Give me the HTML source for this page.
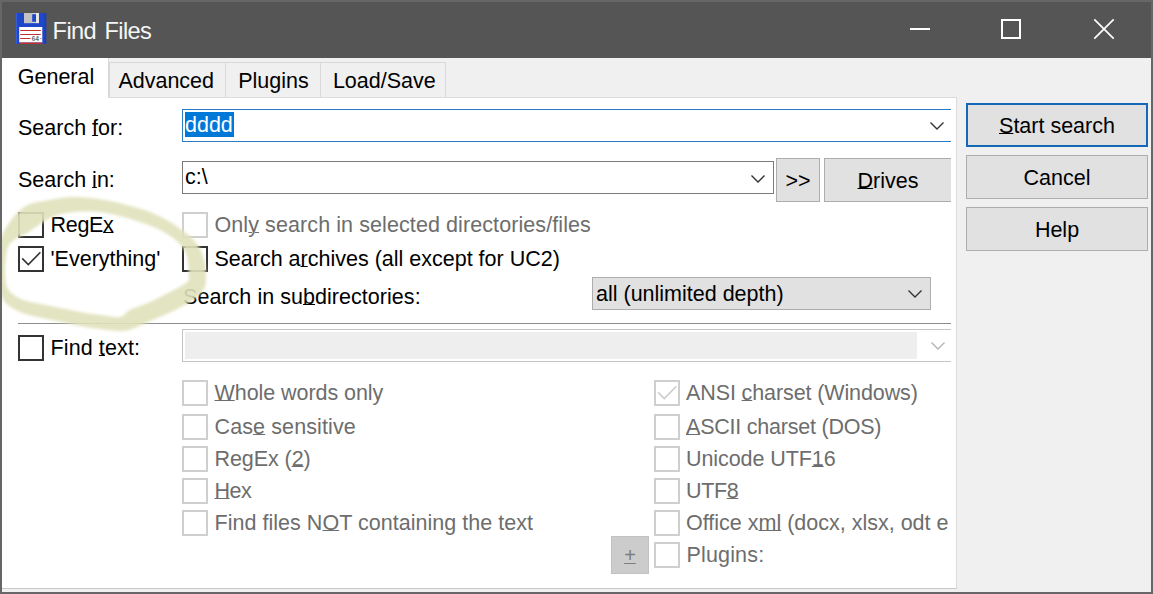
<!DOCTYPE html>
<html><head><meta charset="utf-8"><title>Find Files</title>
<style>
*{box-sizing:border-box;margin:0;padding:0}
html,body{width:1153px;height:594px;overflow:hidden}
body{background:#666;font-family:"Liberation Sans",Arial,sans-serif;font-size:21.5px;color:#000;position:relative}
#client{position:absolute;left:2px;top:58px;width:1149px;height:534px;background:#f0f0f0}
#title{position:absolute;left:2px;top:2px;width:1149px;height:56px;background:#555}
#title .t{position:absolute;left:50.6px;top:14.6px;font-size:23.6px;line-height:28px;color:#f6f6f6;letter-spacing:-0.6px;word-spacing:2.4px;white-space:nowrap}
.tab{position:absolute;top:62px;height:35px;background:#f0f0f0;border:1px solid #d9d9d9;border-bottom:none;line-height:24px;padding-top:6px;text-align:center;white-space:nowrap}
#tab0{left:2px;top:58px;width:107px;height:40px;background:#fff;border:none;border-right:1px solid #d9d9d9;padding-top:7px;z-index:3}
#panel{position:absolute;left:2px;top:97px;width:955px;height:492px;background:#fff;border-right:1px solid #dcdcdc;border-bottom:1px solid #c8c8c8;border-top:1px solid #dcdcdc}
.lbl{position:absolute;white-space:nowrap;line-height:24px;height:24px}
.dis{color:#6d6d6d}
u{text-decoration:underline;text-underline-offset:0.3px;text-decoration-thickness:1px}
.cb{position:absolute;width:26px;height:26px;border:2px solid #333;background:#fff}
.cb.d{border:2px solid #cfcfcf}
.btn{position:absolute;background:#e1e1e1;border:1px solid #adadad;text-align:center;white-space:nowrap;line-height:24px}
.inp{position:absolute;background:#fff;border:1px solid #7a7a7a}
svg{position:absolute;overflow:visible}
</style></head><body>
<div id="title">
<svg style="left:13px;top:11px" width="32" height="32" viewBox="0 0 32 32"><g transform="translate(0.31,0) scale(0.9806,1)">
<rect x="0.5" y="0" width="31" height="31" rx="1.5" fill="#1f48c8"/>
<rect x="0.5" y="0" width="1.2" height="31" fill="#3a5fd6"/>
<rect x="29.5" y="0" width="2" height="31" fill="#1c40b4"/>
<rect x="9" y="0" width="15.1" height="10.1" fill="#d2d2d2"/>
<rect x="9" y="0" width="8" height="10.1" fill="#c2c2c2"/>
<rect x="21.2" y="0" width="2.9" height="10.1" fill="#e8e8e8"/>
<rect x="17.2" y="1.2" width="3.9" height="7.6" fill="#1f48c8"/>
<rect x="4" y="14" width="23.5" height="15.5" fill="#fff"/>
<rect x="4" y="29.5" width="23.5" height="1.5" fill="#c03030"/>
<rect x="5" y="17" width="21" height="1" fill="#c03030"/>
<rect x="5" y="21" width="21" height="1" fill="#c03030"/>
<rect x="5" y="25" width="10.5" height="1" fill="#c03030"/>
<text x="16.4" y="27.6" font-family="Liberation Mono, monospace" font-size="6.5" font-weight="bold" fill="#666">64·</text>
</g></svg>
<div class="t">Find Files</div>
<div style="position:absolute;left:908px;top:26px;width:20px;height:2px;background:#fff"></div>
<div style="position:absolute;left:999px;top:17px;width:20px;height:20px;border:2px solid #fff"></div>
<svg style="left:1092px;top:17px" width="20" height="20" viewBox="0 0 20 20"><path d="M0.3 0.3 L19.7 19.7 M19.7 0.3 L0.3 19.7" stroke="#fff" stroke-width="1.7" fill="none"/></svg>
</div>
<div id="client"></div>
<div id="panel"></div>
<div class="tab" id="tab0"><span style="position:relative;left:1px">General</span></div>
<div class="tab" style="left:109px;width:117px"><span style="position:relative;left:-1.3px">Advanced</span></div>
<div class="tab" style="left:225px;width:96px"><span style="position:relative;left:0.5px">Plugins</span></div>
<div class="tab" style="left:320px;width:126px"><span style="position:relative;left:1.3px">Load/Save</span></div>

<!-- row 1 -->
<div class="lbl" style="left:18px;top:116px">Search <u>f</u>or:</div>
<div class="inp" style="left:182px;top:109px;width:769px;height:33px;border:1px solid #2a7ac4;border-right:none">
  <div style="position:absolute;left:2px;top:2px;height:25px;width:49px;background:#0078d7;color:#fff;line-height:24px;padding-top:1px">dddd</div>
</div>
<svg style="left:930px;top:122px" width="14" height="8" viewBox="0 0 14 8"><path d="M0.5 0.5 L7 7 L13.5 0.5" stroke="#333" stroke-width="1.4" fill="none"/></svg>

<!-- row 2 -->
<div class="lbl" style="left:18px;top:168px">Search <u>i</u>n:</div>
<div class="inp" style="left:182px;top:161px;width:592px;height:33px"><div class="lbl" style="left:2px;top:3px">c:\</div></div>
<svg style="left:751px;top:174.7px" width="14" height="8" viewBox="0 0 14 8"><path d="M0.5 0.5 L7 7 L13.5 0.5" stroke="#333" stroke-width="1.4" fill="none"/></svg>
<div class="btn" style="left:776px;top:158px;width:44px;height:44px;padding-top:10px">&gt;&gt;</div>
<div class="btn" style="left:824px;top:158px;width:127px;height:44px;padding-top:10px;border-right:none"><u>D</u>rives</div>

<!-- right buttons -->
<div class="btn" style="left:966px;top:103px;width:182px;height:44px;border:2px solid #1369b8;padding-top:9px"><u>S</u>tart search</div>
<div class="btn" style="left:966px;top:155px;width:182px;height:44px;padding-top:10px">Cancel</div>
<div class="btn" style="left:966px;top:207px;width:182px;height:44px;padding-top:10px">Help</div>

<!-- checkboxes -->
<div class="cb" style="left:18px;top:212px"></div>
<div class="lbl" style="letter-spacing:-0.300px;left:50.5px;top:213px">RegE<u>x</u></div>
<div class="cb" style="left:18px;top:246px"></div>
<svg style="left:18px;top:246px" width="26" height="26" viewBox="0 0 26 26"><path d="M4.2 12.4 L10.3 18.6 L22.4 6.3" stroke="#333" stroke-width="1.6" fill="none"/></svg>
<div class="lbl" style="left:50.5px;top:247px">'Everything'</div>

<div class="cb d" style="left:182px;top:212px"></div>
<div class="lbl dis" style="letter-spacing:0.087px;left:214.5px;top:213px">Onl<u>y</u> search in selected directories/files</div>
<div class="cb" style="left:182px;top:246px"></div>
<div class="lbl" style="left:214.5px;top:247px">Search a<u>r</u>chives (all except for UC2)</div>
<div class="lbl" style="letter-spacing:0.042px;left:183px;top:285px">Search in su<u>b</u>directories:</div>
<div class="btn" style="left:592px;top:277px;width:339px;height:33px;text-align:left;padding-left:3px;padding-top:4px">all (unlimited depth)</div>
<svg style="left:908px;top:290px" width="14" height="8" viewBox="0 0 14 8"><path d="M0.5 0.5 L7 7 L13.5 0.5" stroke="#333" stroke-width="1.4" fill="none"/></svg>


<!-- separator -->
<div style="position:absolute;left:18px;top:323px;width:933px;height:1px;background:#8e8e8e"></div>

<!-- find text -->
<div class="cb" style="left:18px;top:335px"></div>
<div class="lbl" style="letter-spacing:0.111px;left:50.5px;top:336px">Find <u>t</u>ext:</div>
<div style="position:absolute;left:182px;top:329px;width:769px;height:33px;background:#fff;border:1px solid #c4c4c4;border-right:none">
 <div style="position:absolute;left:2px;top:2px;width:732px;height:27px;background:#eeeeee"></div>
</div>
<svg style="left:931px;top:342px" width="14" height="8" viewBox="0 0 14 8"><path d="M0.5 0.5 L7 7 L13.5 0.5" stroke="#b4b4b4" stroke-width="1.4" fill="none"/></svg>

<!-- left options -->
<div class="cb d" style="left:182px;top:380px"></div><div class="lbl dis" style="letter-spacing:-0.060px;left:214.5px;top:381px"><u>W</u>hole words only</div>
<div class="cb d" style="left:182px;top:414px"></div><div class="lbl dis" style="letter-spacing:0.108px;left:214.5px;top:415px">Cas<u>e</u> sensitive</div>
<div class="cb d" style="left:182px;top:446px"></div><div class="lbl dis" style="letter-spacing:-0.075px;left:214.5px;top:447px">RegEx (<u>2</u>)</div>
<div class="cb d" style="left:182px;top:478px"></div><div class="lbl dis" style="letter-spacing:-0.450px;left:214.5px;top:479px"><u>H</u>ex</div>
<div class="cb d" style="left:182px;top:510px"></div><div class="lbl dis" style="letter-spacing:0.033px;left:214.5px;top:511px">Find files N<u>O</u>T containing the text</div>

<!-- right options -->
<div class="cb d" style="left:654px;top:380px"></div>
<svg style="left:654px;top:380px" width="26" height="26" viewBox="0 0 26 26"><path d="M4.2 12.4 L10.3 18.6 L22.4 6.3" stroke="#ccc" stroke-width="1.6" fill="none"/></svg>
<div class="lbl dis" style="letter-spacing:-0.110px;left:686px;top:381px">ANSI <u>c</u>harset (Windows)</div>
<div class="cb d" style="left:654px;top:414px"></div><div class="lbl dis" style="letter-spacing:-0.222px;left:686px;top:415px"><u>A</u>SCII charset (DOS)</div>
<div class="cb d" style="left:654px;top:446px"></div><div class="lbl dis" style="letter-spacing:-0.075px;left:686px;top:447px">Unicode UTF<u>1</u>6</div>
<div class="cb d" style="left:654px;top:478px"></div><div class="lbl dis" style="letter-spacing:-0.367px;left:686px;top:479px">UTF<u>8</u></div>
<div class="cb d" style="left:654px;top:510px"></div><div class="lbl dis" style="left:686px;top:511px;width:264px;overflow:hidden">Office x<u>ml</u> (docx, xlsx, odt e</div>
<div class="cb d" style="left:654px;top:542px"></div><div class="lbl dis" style="letter-spacing:0.16px;left:686.5px;top:543px">Plugins:</div>
<div class="btn" style="left:611px;top:536px;width:38px;height:38px;background:#ccc;border:1px solid #c2c2c2;padding-top:5.9px;font-size:20px;color:#7d7d7d"><u style="text-underline-offset:1.4px">+</u></div>
<!-- highlighter -->
<svg style="left:2px;top:0;overflow:hidden" width="300" height="400" viewBox="2 0 300 400"><defs><filter id="hb" x="-10%" y="-10%" width="120%" height="120%"><feGaussianBlur stdDeviation="1.5"/></filter></defs><path d="M2.0 236.0 C3.4 233.6 2.6 233.7 4.4 230.6 C6.2 227.5 10.4 220.8 13.0 217.5 C15.6 214.2 17.2 212.8 20.0 210.5 C22.8 208.2 25.0 205.8 30.0 204.0 C35.0 202.2 43.3 201.2 50.0 200.0 C56.7 198.8 63.3 197.3 70.0 197.0 C76.7 196.7 83.3 197.3 90.0 198.0 C96.7 198.7 103.3 199.7 110.0 201.0 C116.7 202.3 123.3 204.2 130.0 206.0 C136.7 207.8 143.3 209.3 150.0 212.0 C156.7 214.7 163.4 218.0 170.0 222.0 C176.6 226.0 184.6 231.7 189.5 236.0 C194.4 240.3 197.0 243.7 199.5 248.0 C202.0 252.3 203.4 257.0 204.5 262.0 C205.6 267.0 206.1 273.5 206.0 278.0 C205.9 282.5 206.2 285.3 204.0 289.0 C201.8 292.7 198.3 296.2 193.0 300.0 C187.7 303.8 179.2 308.0 172.0 311.5 C164.8 315.0 156.7 318.1 150.0 321.0 C143.3 323.9 137.0 327.3 132.0 329.0 C127.0 330.7 125.3 331.0 120.0 331.0 C114.7 331.0 106.7 329.8 100.0 329.0 C93.3 328.2 86.7 327.2 80.0 326.0 C73.3 324.8 66.7 322.9 60.0 321.5 C53.3 320.1 45.5 318.7 40.0 317.5 C34.5 316.3 31.2 315.8 27.0 314.5 C22.8 313.2 18.5 311.3 15.0 309.5 C11.5 307.7 8.2 305.6 6.0 303.5 C3.8 301.4 3.7 300.1 2.0 297.0 C0.3 293.9 -2.7 290.3 -4.0 285.0 C-5.3 279.7 -6.0 271.7 -6.0 265.0 C-6.0 258.3 -5.3 249.8 -4.0 245.0 C-2.7 240.2 0.6 238.4 2.0 236.0Z M5.3 263.0 C5.7 257.9 6.5 251.2 7.6 247.7 C8.7 244.1 10.0 243.6 12.0 241.7 C14.0 239.8 17.5 237.8 19.7 236.5 C21.9 235.2 23.3 234.9 25.0 234.0 C26.7 233.1 27.1 232.9 30.0 231.0 C32.9 229.1 38.8 224.8 42.5 222.5 C46.2 220.2 48.7 218.5 52.0 217.0 C55.3 215.5 57.8 214.7 62.5 213.8 C67.2 212.8 73.8 211.8 80.0 211.5 C86.2 211.2 93.3 211.2 100.0 212.0 C106.7 212.8 113.3 214.3 120.0 216.0 C126.7 217.7 133.3 219.7 140.0 222.0 C146.7 224.3 154.1 227.0 160.0 230.0 C165.9 233.0 171.2 236.3 175.5 240.0 C179.8 243.7 183.3 247.7 185.5 252.0 C187.7 256.3 188.0 262.3 188.5 266.0 C189.0 269.7 188.7 271.3 188.5 274.0 C188.3 276.7 190.6 279.0 187.5 282.0 C184.4 285.0 176.2 288.7 170.0 292.0 C163.8 295.3 156.7 299.0 150.0 302.0 C143.3 305.0 135.0 307.5 130.0 310.0 C125.0 312.5 125.0 316.2 120.0 317.0 C115.0 317.8 106.7 315.8 100.0 315.0 C93.3 314.2 86.7 313.2 80.0 312.0 C73.3 310.8 66.8 309.4 60.0 308.0 C53.2 306.6 45.1 305.0 39.4 303.8 C33.7 302.6 29.8 302.0 25.7 300.7 C21.6 299.4 18.0 298.0 15.0 296.0 C12.0 294.0 9.2 291.6 7.6 288.6 C6.0 285.6 5.7 282.3 5.3 278.0 C4.9 273.7 4.9 268.1 5.3 263.0Z" fill="#e0e1ba" fill-opacity="0.9" fill-rule="evenodd" filter="url(#hb)"/></svg>
</body></html>
